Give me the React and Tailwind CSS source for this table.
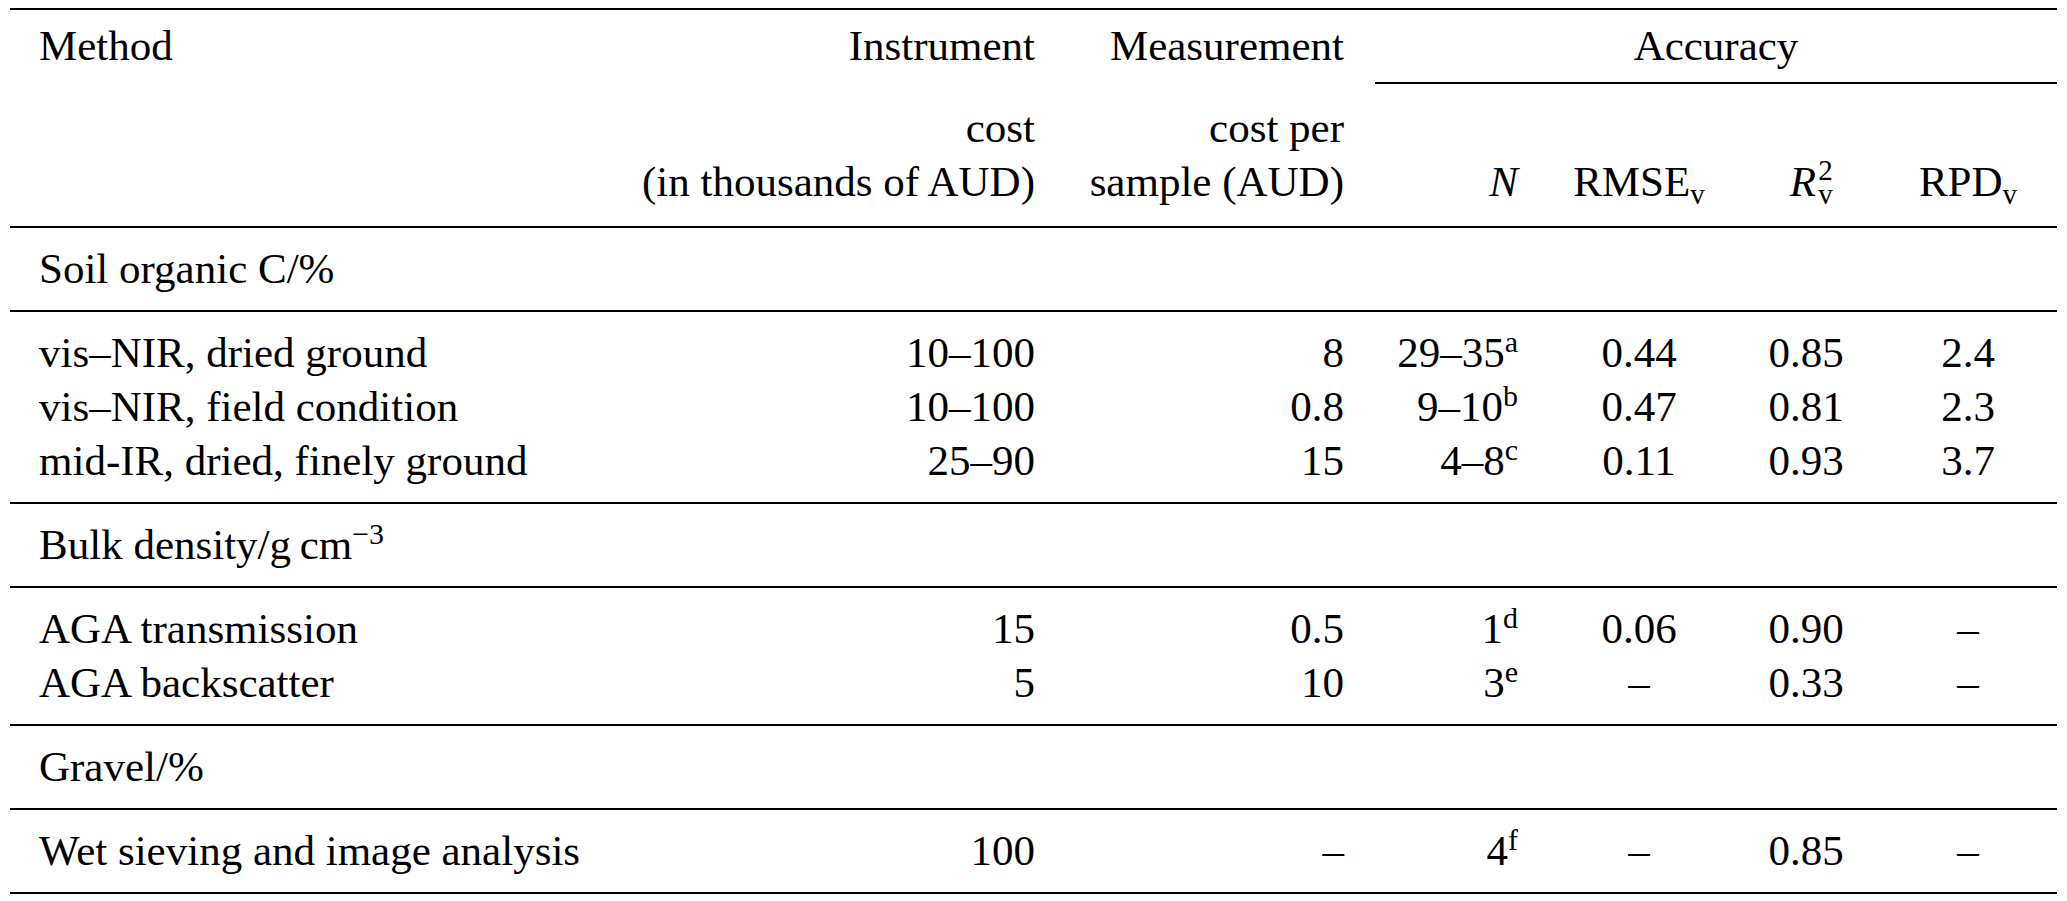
const COLS = 'grid grid-cols-[620px_405px_309px_174px_242px_92px_205px]';

const groups = [
  {
    title: 'Soil organic C/%',
    rows: [
      ['vis–NIR, dried ground', '10–100', '8', ['29–35', 'a'], '0.44', '0.85', '2.4'],
      ['vis–NIR, field condition', '10–100', '0.8', ['9–10', 'b'], '0.47', '0.81', '2.3'],
      ['mid-IR, dried, finely ground', '25–90', '15', ['4–8', 'c'], '0.11', '0.93', '3.7'],
    ],
  },
  {
    title: (
      <>
        Bulk density/g{'\u2009'}cm<sup className="text-[30px] top-[-15px]">−3</sup>
      </>
    ),
    rows: [
      ['AGA transmission', '15', '0.5', ['1', 'd'], '0.06', '0.90', '–'],
      ['AGA backscatter', '5', '10', ['3', 'e'], '–', '0.33', '–'],
    ],
  },
  {
    title: 'Gravel/%',
    rows: [['Wet sieving and image analysis', '100', '–', ['4', 'f'], '–', '0.85', '–']],
  },
];

const Rule = () => <div className="h-[2px] bg-black" />;

const Sub = ({ children }) => <sub className="text-[29px] bottom-[-8px]">{children}</sub>;

const DataRow = ({ row }) => {
  const [method, inst, meas, n, rmse, r2, rpd] = row;
  return (
    <div className={`${COLS} leading-[54px]`}>
      <div className="pl-[29px] whitespace-nowrap">{method}</div>
      <div className="text-right whitespace-nowrap">{inst}</div>
      <div className="text-right whitespace-nowrap">{meas}</div>
      <div className="text-right whitespace-nowrap">
        {n[0]}
        <sup className="text-[30px] top-[-15px]">{n[1]}</sup>
      </div>
      <div className="text-center">{rmse}</div>
      <div className="text-center">{r2}</div>
      <div className="text-center pl-[27px]">{rpd}</div>
    </div>
  );
};

export default function App() {
  return (
    <div className="w-[2067px] h-[901px] bg-white text-black [font-family:Liberation_Serif,Tinos,serif] text-[43px] pt-[8px]">
      <div className="ml-[10px] w-[2047px]">
        <Rule />

        {/* header, first line */}
        <div className={`${COLS} h-[74px]`}>
          <div className="pl-[29px] h-[72px] flex items-center">Method</div>
          <div className="h-[72px] flex items-center justify-end">Instrument</div>
          <div className="h-[72px] flex items-center justify-end">Measurement</div>
          <div className="col-span-4 ml-[31px] h-[74px] border-b-2 border-black flex items-center justify-center">Accuracy</div>
        </div>

        {/* header, second line */}
        <div className={`${COLS} h-[142px] pb-[17px] leading-[54px] items-end`}>
          <div />
          <div className="text-right whitespace-nowrap">
            <div>cost</div>
            <div>(in thousands of AUD)</div>
          </div>
          <div className="text-right whitespace-nowrap">
            <div>cost per</div>
            <div>sample (AUD)</div>
          </div>
          <div className="text-right italic">N</div>
          <div className="text-center">
            RMSE<Sub>v</Sub>
          </div>
          <div className="text-center pl-[10px]">
            <span className="italic">R</span>
            <span className="relative inline-block w-[16px]">
              <span className="absolute left-[2px] bottom-[11px] text-[29px] leading-none">2</span>
              <span className="absolute left-[2px] top-[-16px] text-[29px] leading-none">v</span>
            </span>
          </div>
          <div className="text-center pl-[27px]">
            RPD<Sub>v</Sub>
          </div>
        </div>
        <Rule />

        {groups.map((g, i) => (
          <div key={i}>
            <div className="py-[14px] leading-[54px] pl-[29px] whitespace-nowrap">{g.title}</div>
            <Rule />
            <div className="py-[14px]">
              {g.rows.map((r, j) => (
                <DataRow key={j} row={r} />
              ))}
            </div>
            <Rule />
          </div>
        ))}
      </div>
    </div>
  );
}
